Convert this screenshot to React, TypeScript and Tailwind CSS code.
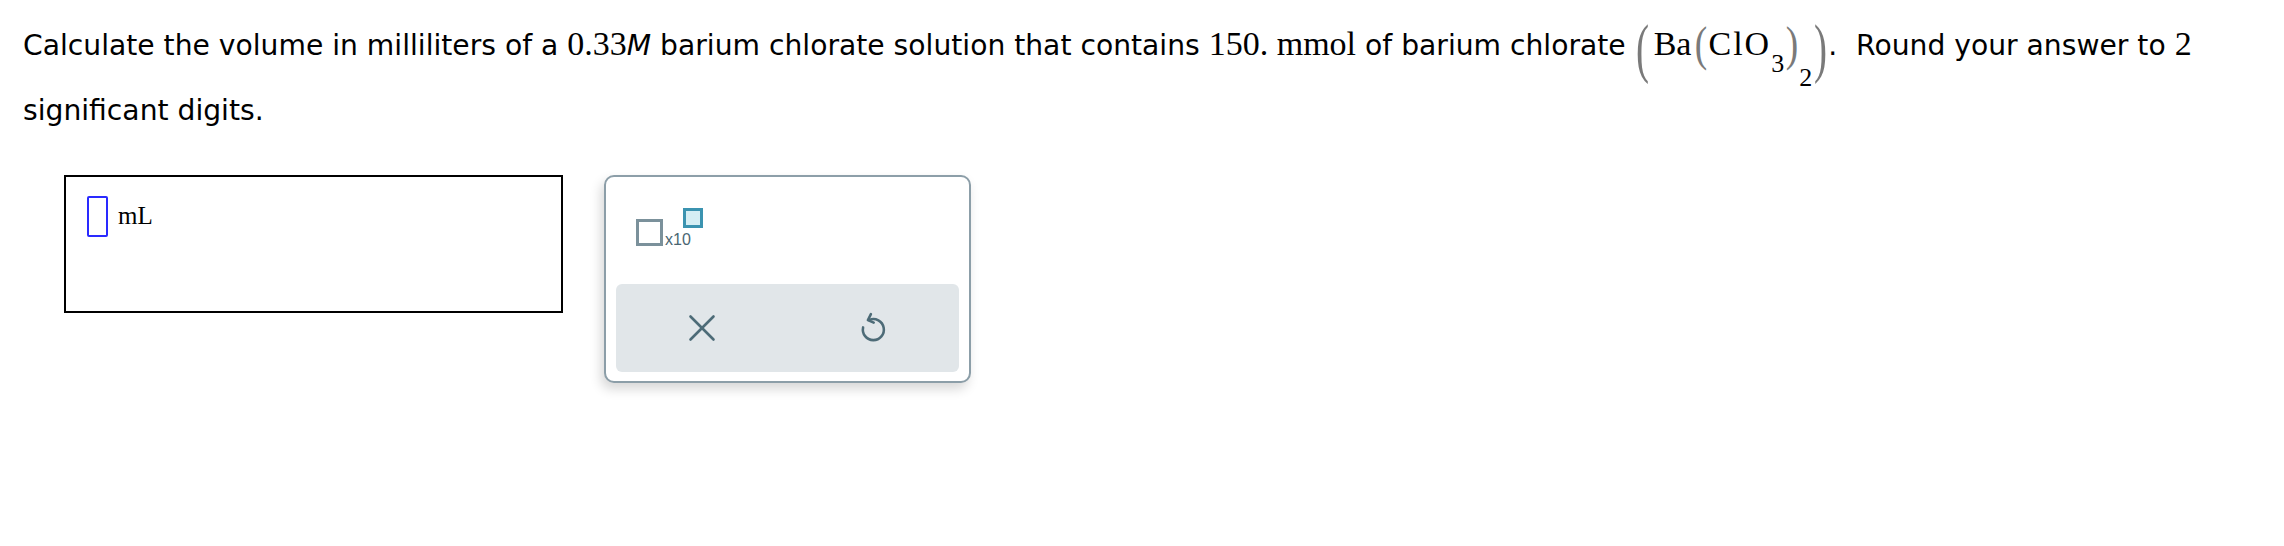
import React from 'react';

const serif = "font-['Liberation_Serif',serif]";

function Formula() {
  return (
    <span className={`${serif} text-[34px] whitespace-nowrap`}>
      <span className="inline-block w-[15px] text-center leading-none text-[#7a7a7a] scale-y-[1.95] scale-x-[1.15] align-[-5px]">(</span>
      <span className="ml-[4px]">Ba</span>
      <span className="inline-block w-[14px] ml-[3px] text-center leading-none text-[#7a7a7a] scale-y-[1.45] scale-x-[1.1]">(</span>
      <span className="tracking-[2px]">ClO</span>
      <span className="inline-block w-[14px] text-[26px] align-[-17px]">3</span>
      <span className="inline-block w-[14px] text-center leading-none text-[#7a7a7a] scale-y-[1.45] scale-x-[1.1]">)</span>
      <span className="inline-block w-[12px] text-[26px] align-[-31px]">2</span>
      <span className="inline-block w-[15px] ml-[2px] text-center leading-none text-[#7a7a7a] scale-y-[1.95] scale-x-[1.15] align-[-5px]">)</span>
    </span>
  );
}

function XIcon() {
  return (
    <svg width="28" height="28" viewBox="0 0 28 28" fill="none" stroke="#4d6b77" strokeWidth="2.6" strokeLinecap="round">
      <path d="M2.5 2.5 L25.5 25.5" />
      <path d="M25.5 2.5 L2.5 25.5" />
    </svg>
  );
}

function UndoIcon() {
  return (
    <svg width="36" height="36" viewBox="0 0 24 24" fill="none" stroke="#4d6b77" strokeWidth="1.7" strokeLinecap="round" strokeLinejoin="round">
      <path d="M9.6 6.6 A7 7 0 1 1 5.4 11.6" />
      <path d="M10.6 2.8 L8.6 6.7 L12.5 8.4" />
    </svg>
  );
}

export default function App() {
  return (
    <div className="min-h-screen bg-white text-black">
      <div className="pl-[23px] pt-[27px] font-['DejaVu_Sans',sans-serif] text-[28.2px]">
        <div className="h-[67px] leading-[34px] whitespace-nowrap">
          Calculate the volume in milliliters of a{' '}
          <span className={serif + ' text-[34px]'}>0.33</span>
          <span className="italic">M</span> barium chlorate solution that contains{' '}
          <span className={serif + ' text-[34px]'}>150. mmol</span> of barium chlorate <Formula />
          <span>.</span>
          <span className="ml-[19px]">Round your answer to</span>{' '}
          <span className={serif + ' text-[34px]'}>2</span>
        </div>
        <div className="leading-[34px]">significant digits.</div>
      </div>

      <div className="flex items-start pl-[64px] mt-[47px] gap-[41px]">
        <div className="w-[499px] h-[138px] border-2 border-black pl-[21px] pt-[19px]">
          <div className="flex items-end gap-[10px]">
            <div className="w-[21px] h-[41px] border-2 border-[#2a2aff] rounded-[2px]" />
            <span className={`${serif} text-[25px] leading-none mb-[9px]`}>mL</span>
          </div>
        </div>

        <div className="w-[367px] h-[208px] border-2 border-[#8c9ea8] rounded-[10px] bg-white shadow-[-3px_6px_12px_rgba(0,0,0,0.16)] flex flex-col">
          <div className="pl-[30px] pt-[31px] h-[107px]">
            <div className="flex items-start">
              <div className="mt-[11px] w-[27px] h-[27px] border-[3px] border-[#7b919b]" />
              <span className="mt-[24px] ml-[2px] font-['Liberation_Sans',sans-serif] text-[16px] leading-none text-[#4a6672]">x10</span>
              <div className="ml-[-8px] w-[20px] h-[20px] border-[3px] border-[#3b93b0] bg-[#d5eef4]" />
            </div>
          </div>
          <div className="mx-[10px] h-[88px] rounded-[6px] bg-[#e1e6e9] grid grid-cols-2 items-center">
            <div className="flex justify-center"><XIcon /></div>
            <div className="flex justify-center"><UndoIcon /></div>
          </div>
        </div>
      </div>
    </div>
  );
}
